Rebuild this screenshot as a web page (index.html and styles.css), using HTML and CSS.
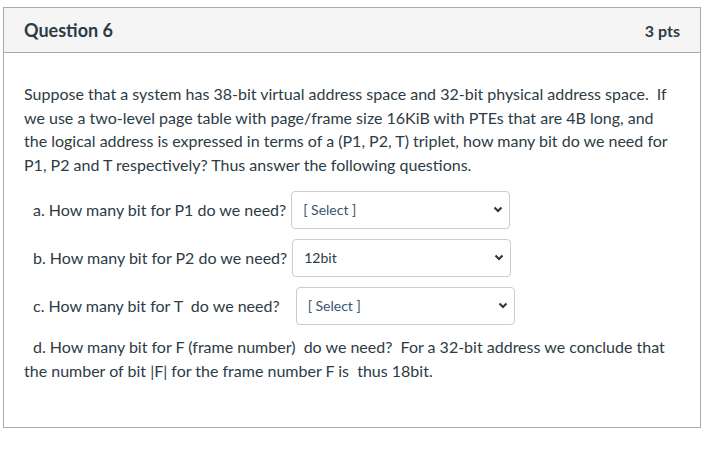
FILE: index.html
```html
<!DOCTYPE html>
<html>
<head>
  <title>Question 6</title>
  <link rel="stylesheet" href="styles.css">
</head>
<body>
  <div class="question">
    <div class="question-header">
      <div class="question-name">Question 6</div>
      <div class="question-points">3 pts</div>
    </div>

    <div class="question-text">
      <p class="intro">Suppose that a system has 38-bit virtual address space and 32-bit physical address space.&nbsp; If we use a two-level page table with page/frame size 16KiB with PTEs that are 4B long, and the logical address is expressed in terms of a (P1, P2, T) triplet, how many bit do we need for P1, P2 and T respectively? Thus answer the following questions.</p>

      <div class="answer-row">
        <span class="label">a. How many bit for P1 do we need?</span>
        <div class="dropdown">
          <span class="dropdown-value placeholder">[ Select ]</span>
          <svg class="chevron" width="10" height="7" viewBox="0 0 10 7"><path d="M1.5 1.5 L5 5 L8.5 1.5" fill="none" stroke="#2d3b45" stroke-width="2.2"/></svg>
        </div>
      </div>

      <div class="answer-row">
        <span class="label">b. How many bit for P2 do we need?</span>
        <div class="dropdown">
          <span class="dropdown-value">12bit</span>
          <svg class="chevron" width="10" height="7" viewBox="0 0 10 7"><path d="M1.5 1.5 L5 5 L8.5 1.5" fill="none" stroke="#2d3b45" stroke-width="2.2"/></svg>
        </div>
      </div>

      <div class="answer-row">
        <span class="label">c. How many bit for T&nbsp; do we need?</span>
        <div class="dropdown dropdown-wide-gap">
          <span class="dropdown-value placeholder">[ Select ]</span>
          <svg class="chevron" width="10" height="7" viewBox="0 0 10 7"><path d="M1.5 1.5 L5 5 L8.5 1.5" fill="none" stroke="#2d3b45" stroke-width="2.2"/></svg>
        </div>
      </div>

      <p class="last">d. How many bit for F (frame number)&nbsp; do we need?&nbsp; For a 32-bit address we conclude that the number of bit |F| for the frame number F is&nbsp; thus 18bit.</p>
    </div>
  </div>
</body>
</html>
```

FILE: styles.css
```css
body {
  margin: 0;
  font-family: Lato, "Liberation Sans", sans-serif;
  color: #2d3b45;
  background: #fff;
}
.question {
  margin: 7px 0 0 3px;
  width: 698px;
  height: 421px;
  box-sizing: border-box;
  border: 1px solid #a9a9a9;
}
.question-header {
  display: flex;
  justify-content: space-between;
  align-items: center;
  height: 44px;
  padding: 0 20px 0 20px;
  background: #f5f5f5;
  border-bottom: 1px solid #a9a9a9;
  font-weight: 700;
}
.question-name {
  font-size: 18px;
}
.question-points {
  font-size: 16px;
}
.question-text {
  padding: 29px 20px 0 20px;
  font-size: 16px;
  line-height: 23.7px;
}
.intro {
  margin: 0 0 14px 0;
}
.answer-row {
  display: flex;
  align-items: center;
  height: 38px;
  margin-bottom: 10px;
  padding-left: 9px;
}
.label {
  white-space: pre;
}
.dropdown {
  display: flex;
  align-items: center;
  justify-content: space-between;
  width: 219px;
  height: 38px;
  box-sizing: border-box;
  margin-left: 5px;
  padding: 0 6px 0 11px;
  border: 1px solid #c7cdd1;
  border-radius: 4px;
  font-size: 14px;
}
.dropdown-wide-gap {
  margin-left: 16px;
}
.placeholder {
  color: #3b5670;
}
.last {
  margin: 0;
  text-indent: 9px;
}
```
